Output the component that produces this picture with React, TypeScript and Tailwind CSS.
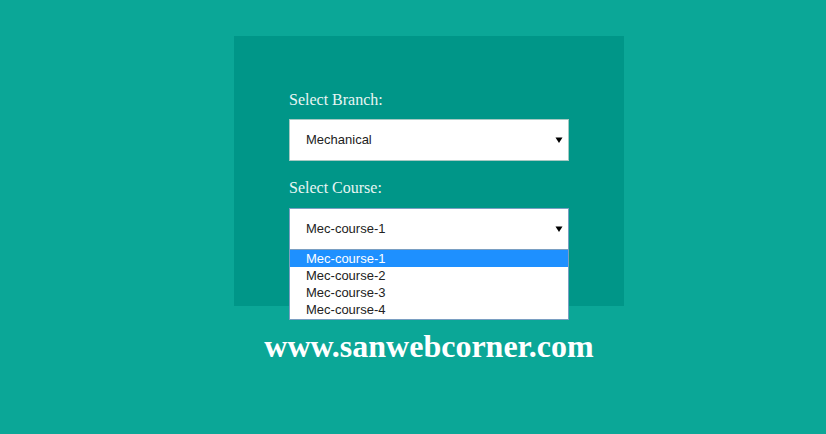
const courses = ['Mec-course-1', 'Mec-course-2', 'Mec-course-3', 'Mec-course-4']

const Arrow = () => (
  <svg width="8" height="8" viewBox="0 0 8 8" className="absolute right-[5px] top-1/2 -translate-y-1/2">
    <path d="M0.5 1.5 H7.5 L4 7 Z" fill="#000" />
  </svg>
)

const SelectBox = ({ value, focused }: { value: string; focused?: boolean }) => (
  <div
    className={`relative flex h-[42px] w-[280px] items-center bg-white pl-[16px] text-[13px] text-[#222] border ${
      focused ? 'border-[#7a9fc2]' : 'border-[#a7c9c3]'
    }`}
    style={{ fontFamily: 'Arial, "Liberation Sans", sans-serif' }}
  >
    {value}
    <Arrow />
  </div>
)

export default function App() {
  return (
    <div className="min-h-[434px] w-full bg-[#0ba797]">
      <div className="ml-[234px] w-[390px] pt-[36px]">
        <div className="h-[270px] bg-[#009688] px-[55px] pt-[54px]">
          <div
            className="mb-[9px] text-[16px] leading-[20px] text-[#e8f5f3]"
            style={{ fontFamily: '"Liberation Serif", "Times New Roman", serif' }}
          >
            Select Branch:
          </div>
          <SelectBox value="Mechanical" />
          <div
            className="mb-[10px] mt-[17px] text-[16px] leading-[20px] text-[#e8f5f3]"
            style={{ fontFamily: '"Liberation Serif", "Times New Roman", serif' }}
          >
            Select Course:
          </div>
          <div className="relative">
            <SelectBox value="Mec-course-1" focused />
            <ul
              className="absolute left-0 top-[42px] z-10 w-[280px] border border-t-0 border-[#7a9fc2] bg-white pb-[1px] text-[13px] leading-[17px] text-[#222]"
              style={{ fontFamily: 'Arial, "Liberation Sans", sans-serif' }}
            >
              {courses.map((c, i) => (
                <li key={c} className={`pl-[16px] ${i === 0 ? 'bg-[#1e90ff] text-white' : ''}`}>
                  {c}
                </li>
              ))}
            </ul>
          </div>
        </div>
        <div
          className="pt-[24px] text-center text-[32px] font-bold leading-[32px] text-white"
          style={{ fontFamily: '"Liberation Serif", "Times New Roman", serif' }}
        >
          www.sanwebcorner.com
        </div>
      </div>
    </div>
  )
}
